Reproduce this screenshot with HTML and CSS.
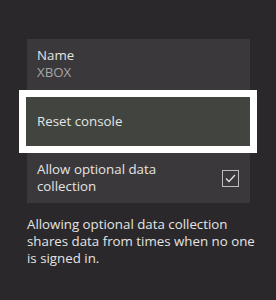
FILE: index.html
```html
<!DOCTYPE html>
<html lang="en">
<head>
    <meta charset="UTF-8">
    <meta name="viewport" content="width=device-width, initial-scale=1.0">
    <title>Console settings</title>
    <link rel="stylesheet" href="styles.css">
</head>
<body>

<div class="settings">
    <!-- Name -->
    <div class="card">
        <div class="label">Name</div>
        <div class="value">XBOX</div>
    </div>

    <!-- Focused item -->
    <div class="card focused">
        <div class="label">Reset console</div>
    </div>

    <!-- Checkbox item -->
    <div class="card toggle">
        <div class="label">Allow optional data collection</div>
        <span class="checkbox">
            <svg width="11" height="9" viewBox="0 0 11 9">
                <polyline points="1,4.5 4,7.5 10,1" fill="none" stroke="#e0e0e0" stroke-width="1.3"/>
            </svg>
        </span>
    </div>

    <p class="note">Allowing optional data collection shares data from times when no one is signed in.</p>
</div>

</body>
</html>
```

FILE: styles.css
```css
body {
    margin: 0;
    background-color: #2a282a;
    font-family: "Open Sans", "Noto Sans", sans-serif;
    color: #e4e4e4;
    width: 276px;
    height: 300px;
}
.settings {
    padding: 39px 26px 0 27px;
    display: flex;
    flex-direction: column;
    gap: 7px;
}
.card {
    background-color: #3a383a;
    padding: 8px 10px;
    font-size: 13.3px;
    line-height: 17px;
    box-sizing: border-box;
    height: 51px;
}
.card .value {
    color: #a6a6a6;
}
.focused {
    background-color: #41443f;
    height: 49px;
    display: flex;
    align-items: center;
    outline: 7px solid #ffffff;
    margin-left: -1px;
    padding-left: 11px;
}
.toggle {
    display: flex;
    align-items: center;
    justify-content: space-between;
    height: 50px;
}
.toggle .label {
    width: 134px;
}
.checkbox {
    width: 15px;
    height: 15px;
    border: 1px solid #bdbdbd;
    display: flex;
    align-items: center;
    justify-content: center;
    margin-right: 1px;
}
.note {
    margin: 6px -16px 0 0;
    font-size: 13.3px;
    line-height: 17px;
}
```
